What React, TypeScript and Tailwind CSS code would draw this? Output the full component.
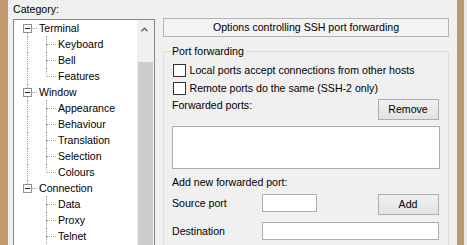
import React from "react";

type TreeRow = {
  label: string;
  level: 0 | 1;
  last?: boolean;
  parentLast?: boolean;
};

const rows: TreeRow[] = [
  { label: "Terminal", level: 0 },
  { label: "Keyboard", level: 1 },
  { label: "Bell", level: 1 },
  { label: "Features", level: 1, last: true },
  { label: "Window", level: 0 },
  { label: "Appearance", level: 1 },
  { label: "Behaviour", level: 1 },
  { label: "Translation", level: 1 },
  { label: "Selection", level: 1 },
  { label: "Colours", level: 1, last: true },
  { label: "Connection", level: 0, last: true },
  { label: "Data", level: 1, parentLast: true },
  { label: "Proxy", level: 1, parentLast: true },
  { label: "Telnet", level: 1, parentLast: true },
];

const dot = "absolute border-dotted border-[#a0a0a0]";

const RootRow = ({ row, first }: { row: TreeRow; first: boolean }) => (
  <div className="flex h-[16px] items-center">
    <div className="relative h-full w-[19px] shrink-0">
      {!first && <span className={`${dot} left-[9px] top-0 h-[4px] border-l`} />}
      {!row.last && <span className={`${dot} left-[9px] top-[13px] bottom-0 border-l`} />}
      <span className="absolute left-[5px] top-[4px] h-[9px] w-[9px] border border-[#919191] bg-white">
        <span className="absolute left-[1px] top-[3px] h-px w-[5px] bg-[#1e1e1e]" />
      </span>
      <span className={`${dot} left-[14px] top-[8px] w-[5px] border-t`} />
    </div>
    <span className="ml-[2px] whitespace-nowrap leading-[16px]">{row.label}</span>
  </div>
);

const ChildRow = ({ row }: { row: TreeRow }) => (
  <div className="flex h-[16px] items-center">
    <div className="relative h-full w-[19px] shrink-0">
      {!row.parentLast && <span className={`${dot} left-[9px] top-0 bottom-0 border-l`} />}
    </div>
    <div className="relative h-full w-[19px] shrink-0">
      <span className={`${dot} left-[9px] top-0 h-[8px] border-l`} />
      {!row.last && <span className={`${dot} left-[9px] top-[8px] bottom-0 border-l`} />}
      <span className={`${dot} left-[10px] top-[8px] w-[9px] border-t`} />
    </div>
    <span className="ml-[2px] whitespace-nowrap leading-[16px]">{row.label}</span>
  </div>
);

const Button = ({ children }: { children: React.ReactNode }) => (
  <button
    type="button"
    className="mr-[1.5px] flex h-[21px] w-[61px] shrink-0 items-center justify-center border border-[#adadad] bg-linear-to-b from-[#f0f0f0] to-[#e3e3e3] leading-[13px]"
  >
    {children}
  </button>
);

const Checkbox = ({ label }: { label: string }) => (
  <div className="flex h-[18.5px] items-center">
    <span className="ml-[1px] h-[13px] w-[13px] shrink-0 border border-[#333333] bg-white" />
    <span className="ml-[3.5px] whitespace-nowrap leading-[13px]">{label}</span>
  </div>
);

export default function App() {
  return (
    <div className="flex h-[245px] w-[467px] overflow-hidden bg-[#f0f0f0] font-['Liberation_Sans',Arial,sans-serif] text-[10.6px] text-black">
      <div className="w-[8px] shrink-0 bg-[#c09a6e]" />

      <div className="flex w-[147px] shrink-0 flex-col pl-[5px] pt-[3px]">
        <div className="leading-[13px]">Category:</div>
        <div className="mt-[3px] flex h-[240px] shrink-0 border border-[#828790] bg-white">
          <div className="flex-1 overflow-hidden pl-[4px]">
            {rows.map((row, i) =>
              row.level === 0 ? (
                <RootRow key={row.label} row={row} first={i === 0} />
              ) : (
                <ChildRow key={row.label} row={row} />
              )
            )}
          </div>
          <div className="flex w-[17px] shrink-0 flex-col bg-[#f0f0f0]">
            <div className="flex h-[17px] items-center pl-[4px] pt-[2px]">
              <svg width="7" height="5" viewBox="0 0 7 5">
                <path d="M0.5 4.2 L3.5 1.2 L6.5 4.2" fill="none" stroke="#606060" strokeWidth="1.3" />
              </svg>
            </div>
            <div className="mx-[1px] mt-[25px] flex-1 bg-[#cdcdcd]" />
          </div>
        </div>
      </div>

      <div className="ml-[8px] flex w-[286px] shrink-0 flex-col pt-[18px]">
        <div className="flex h-[19px] shrink-0 items-center justify-center border border-[#b4b4b4] bg-[#f3f3f3] leading-[13px]">
          Options controlling SSH port forwarding
        </div>

        <fieldset className="mt-[8px] h-[300px] shrink-0 border border-[#dcdcdc] px-[8px]">
          <legend className="-ml-[2px] px-[2px] leading-[13px]">Port forwarding</legend>

          <div className="mt-[3px]">
            <Checkbox label="Local ports accept connections from other hosts" />
            <Checkbox label="Remote ports do the same (SSH-2 only)" />
          </div>

          <div className="flex items-start justify-between">
            <span className="mt-[0.5px] leading-[13px]">Forwarded ports:</span>
            <div className="mt-[1px]">
              <Button>Remove</Button>
            </div>
          </div>

          <div className="mt-[6px] h-[42.5px] border border-[#abadb3] bg-white" />

          <div className="mt-[7px] leading-[13px]">Add new forwarded port:</div>

          <div className="mt-[5.5px] flex items-start">
            <div className="flex h-[18px] w-[90px] shrink-0 items-center leading-[13px]">Source port</div>
            <input
              type="text"
              readOnly
              className="h-[18px] w-[55px] shrink-0 border border-[#abadb3] bg-white outline-none"
            />
            <div className="ml-auto">
              <Button>Add</Button>
            </div>
          </div>

          <div className="mt-[7px] flex items-start">
            <div className="flex h-[18px] w-[90px] shrink-0 items-center leading-[13px]">Destination</div>
            <input
              type="text"
              readOnly
              className="mr-[1.5px] h-[18px] min-w-0 flex-1 border border-[#abadb3] bg-white outline-none"
            />
          </div>
        </fieldset>
      </div>

      <div className="ml-[8px] w-[7px] shrink-0 bg-[#bd9a6e]" />
      <div className="flex-1 bg-[#e9e9e9]" />
    </div>
  );
}
